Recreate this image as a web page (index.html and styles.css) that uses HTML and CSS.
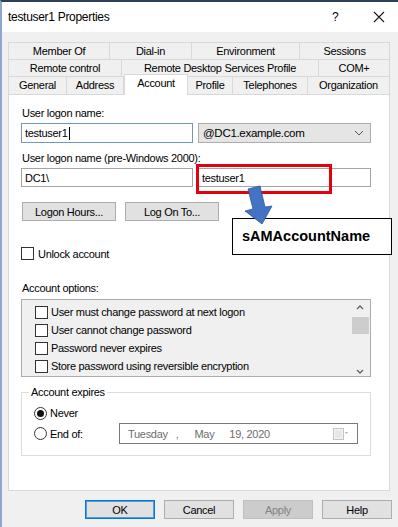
FILE: index.html
```html
<!DOCTYPE html>
<html lang="en">
  <head>
    <meta charset="UTF-8" />
    <meta name="viewport" content="width=device-width, initial-scale=1.0" />
    <title>testuser1 Properties</title>
    <link rel="stylesheet" href="styles.css">
  </head>
  <body>
    <div class="window">
      <div class="titlebar">
        <span class="title">testuser1 Properties</span>
        <span class="title-help">?</span>
        <span class="title-close">
          <svg width="12" height="12" viewBox="0 0 12 12">
            <path d="M1 1 L11 11 M11 1 L1 11" stroke="#1a1a1a" stroke-width="1.1" fill="none" />
          </svg>
        </span>
      </div>

      <div class="dialog">
        <div class="tabs">
          <div class="tab-row row-1">
            <div class="tab first">Member Of</div>
            <div class="tab">Dial-in</div>
            <div class="tab">Environment</div>
            <div class="tab">Sessions</div>
          </div>
          <div class="tab-row row-2">
            <div class="tab first">Remote control</div>
            <div class="tab">Remote Desktop Services Profile</div>
            <div class="tab">COM+</div>
          </div>
          <div class="tab-row row-3">
            <div class="tab first">General</div>
            <div class="tab">Address</div>
            <div class="tab active">Account</div>
            <div class="tab">Profile</div>
            <div class="tab">Telephones</div>
            <div class="tab">Organization</div>
          </div>
        </div>

        <div class="panel">
          <div class="label">User logon name:</div>
          <div class="field-row tall">
            <div class="textbox focused">testuser1<span class="caret"></span></div>
            <div class="combo">
              <span>@DC1.example.com</span>
              <svg width="10" height="6" viewBox="0 0 10 6">
                <path d="M1 1 L5 5 L9 1" stroke="#555" stroke-width="1" fill="none" />
              </svg>
            </div>
          </div>

          <div class="label gap-8">User logon name (pre-Windows 2000):</div>
          <div class="field-row">
            <div class="textbox">DC1\</div>
            <div class="textbox">testuser1</div>
          </div>

          <div class="button-row">
            <div class="btn">Logon Hours...</div>
            <div class="btn">Log On To...</div>
          </div>

          <div class="check-row unlock">
            <span class="checkbox"></span>
            <span>Unlock account</span>
          </div>

          <div class="label gap-20">Account options:</div>
          <div class="listbox">
            <div class="list-items">
              <div class="list-item"><span class="checkbox"></span>User must change password at next logon</div>
              <div class="list-item"><span class="checkbox"></span>User cannot change password</div>
              <div class="list-item"><span class="checkbox"></span>Password never expires</div>
              <div class="list-item"><span class="checkbox"></span>Store password using reversible encryption</div>
            </div>
            <div class="scrollbar">
              <svg class="scroll-arrow" width="16" height="10" viewBox="0 0 16 10">
                <path d="M5 6 L8 3 L11 6" stroke="#606060" stroke-width="1.3" fill="none" />
              </svg>
              <div class="scroll-thumb"></div>
              <div class="scroll-track"></div>
              <svg class="scroll-arrow" width="16" height="10" viewBox="0 0 16 10">
                <path d="M5 4 L8 7 L11 4" stroke="#606060" stroke-width="1.3" fill="none" />
              </svg>
            </div>
          </div>

          <fieldset class="group">
            <legend>Account expires</legend>
            <div class="group-body">
              <div class="radio-row">
                <span class="radio checked"></span>
                <span>Never</span>
              </div>
              <div class="radio-row end-of">
                <span class="radio"></span>
                <span class="end-label">End of:</span>
                <div class="datepicker">
                  <span class="dp-day">Tuesday</span>
                  <span class="dp-comma">,</span>
                  <span class="dp-month">May</span>
                  <span class="dp-date">19, 2020</span>
                  <svg class="dp-icon" width="18" height="12" viewBox="0 0 18 12">
                    <rect x="0.5" y="0.5" width="10" height="11" fill="#f4f4f4" stroke="#c4c4c4" />
                    <path d="M2 3 H9 M2 5 H9 M2 7 H9 M2 9 H9" stroke="#dadada" stroke-width="1" />
                    <path d="M12 4 L15 4 L13.5 6 Z" fill="#b0b0b0" />
                  </svg>
                </div>
              </div>
            </div>
          </fieldset>

          <!-- annotation drawn over the screenshot -->
          <div class="highlight"></div>
          <svg class="pointer" width="36" height="42" viewBox="0 0 36 42">
            <path d="M8 5 L20 2 L25 23 L32 22 L22 40 L5 27 L13 25 Z" fill="#4472c4" stroke="#2f5597" stroke-width="0.8" />
          </svg>
          <div class="callout">sAMAccountName</div>
        </div>

        <div class="dialog-buttons">
          <div class="btn default">OK</div>
          <div class="btn">Cancel</div>
          <div class="btn disabled">Apply</div>
          <div class="btn">Help</div>
        </div>
      </div>
    </div>
  </body>
</html>
```

FILE: styles.css
```css
* {
  margin: 0;
  padding: 0;
  box-sizing: border-box;
}

body {
  width: 398px;
  height: 527px;
  overflow: hidden;
  font-family: "Liberation Sans", Arial, sans-serif;
  font-size: 11px;
  letter-spacing: -0.3px;
  color: #000;
  background: #f0f0f0;
}

.window {
  height: 527px;
  display: flex;
  flex-direction: column;
  border-top: 2px solid #2e4057;
  border-left: 2px solid #8ca6cc;
}

.titlebar {
  height: 30px;
  background: #fff;
  display: flex;
  align-items: center;
  padding-left: 6px;
}

.title {
  font-size: 12px;
  flex: 1;
}

.title-help {
  font-size: 12px;
  width: 16px;
  margin-right: 25px;
}

.title-close {
  display: flex;
  width: 12px;
  margin-right: 13px;
}

.dialog {
  flex: 1;
  padding: 10px 6px 0 6px;
}

/* tabs */
.tab-row {
  display: grid;
  height: 17px;
}

.row-1 {
  grid-template-columns: 102px 82px 108px 90px;
}

.row-2 {
  grid-template-columns: 114px 197px 71px;
}

.row-3 {
  grid-template-columns: 59px 57px 64px 45px 75px 82px;
  height: 18px;
}

.tab {
  border-top: 1px solid #d9d9d9;
  border-right: 1px solid #d9d9d9;
  background: #f0f0f0;
  text-align: center;
  line-height: 16px;
  white-space: nowrap;
}

.tab.first {
  border-left: 1px solid #d9d9d9;
}

.tab.active {
  position: relative;
  z-index: 1;
  background: #fff;
  border-left: 1px solid #d9d9d9;
  margin-top: -2px;
  margin-bottom: -1px;
  line-height: 16px;
}

/* page */
.panel {
  position: relative;
  height: 397px;
  width: 382px;
  background: #fff;
  border: 1px solid #d9d9d9;
  padding: 11px 18px 0 12px;
}

.label {
  line-height: 14px;
  margin-bottom: 3px;
  margin-left: 1px;
}

.gap-8 {
  margin-top: 8px;
}

.gap-20 {
  margin-top: 20px;
}

.field-row {
  display: grid;
  grid-template-columns: 172px 173px;
  gap: 5px;
  height: 19px;
}

.field-row.tall {
  height: 20px;
}

.textbox {
  border: 1px solid #a3a3a3;
  background: #fff;
  padding-left: 3px;
  display: flex;
  align-items: center;
}

.textbox.focused {
  border-color: #7596bb;
}

.caret {
  width: 1px;
  height: 13px;
  background: #000;
  margin-left: 1px;
}

.combo {
  border: 1px solid #adadad;
  background: #e5e5e5;
  display: flex;
  align-items: center;
  justify-content: space-between;
  padding: 0 6px 0 4px;
  font-size: 11.5px;
}

.button-row {
  display: flex;
  gap: 9px;
  margin-top: 15px;
  margin-left: 1px;
}

.btn {
  height: 19px;
  background: #e1e1e1;
  border: 1px solid #adadad;
  display: flex;
  align-items: center;
  justify-content: center;
}

.button-row .btn {
  width: 94px;
}

.checkbox {
  display: inline-block;
  width: 13px;
  height: 13px;
  border: 1px solid #333;
  background: #fff;
  flex-shrink: 0;
}

.check-row {
  display: flex;
  align-items: center;
  gap: 4px;
  height: 15px;
}

.check-row.unlock {
  margin-top: 25px;
}

/* account options list */
.listbox {
  display: flex;
  width: 350px;
  height: 78px;
  margin-top: 4px;
  border: 1px solid #acacac;
  background: #f0f0f0;
}

.list-items {
  flex: 1;
  padding: 3px 0 0 13px;
}

.list-item {
  display: flex;
  align-items: center;
  gap: 3px;
  height: 18px;
}

.scrollbar {
  width: 17px;
  display: flex;
  flex-direction: column;
  padding-top: 3px;
  margin-right: 1px;
}

.scroll-arrow {
  display: block;
  flex-shrink: 0;
}

.scroll-thumb {
  height: 17px;
  margin: 4px 0 0 0;
  background: #cdcdcd;
}

.scroll-track {
  flex: 1;
}

/* account expires group */
.group {
  width: 350px;
  margin-top: 8px;
  border: 1px solid #dcdcdc;
  padding: 7px 0 11px 0;
}

.group legend {
  margin-left: 7px;
  padding: 0 2px;
  line-height: 14px;
}

.group-body {
  padding-left: 12px;
}

.radio-row {
  display: flex;
  align-items: center;
  gap: 3px;
  height: 14px;
}

.radio {
  width: 13px;
  height: 13px;
  border: 1px solid #333;
  border-radius: 50%;
  background: #fff;
  display: flex;
  align-items: center;
  justify-content: center;
}

.radio.checked::after {
  content: "";
  width: 7px;
  height: 7px;
  border-radius: 50%;
  background: #111;
}

.radio-row.end-of {
  height: 21px;
  margin-top: 3px;
}

.end-label {
  width: 66px;
}

.datepicker {
  width: 239px;
  height: 21px;
  border: 1px solid #7a7a7a;
  display: flex;
  align-items: center;
  color: #6d6d6d;
  padding-left: 8px;
}

.dp-comma {
  margin-left: 8px;
}

.dp-month {
  margin-left: 16px;
}

.dp-date {
  margin-left: 15px;
}

.dp-icon {
  margin-left: auto;
  margin-right: 6px;
}

/* annotation overlay */
.highlight {
  position: absolute;
  left: 187px;
  top: 69px;
  width: 136px;
  height: 30px;
  border: 3px solid #e3000f;
}

.pointer {
  position: absolute;
  z-index: 2;
  left: 231px;
  top: 89px;
}

.callout {
  position: absolute;
  left: 223px;
  top: 123px;
  width: 160px;
  height: 37px;
  background: #fff;
  border: 1px solid #000;
  font-size: 14.5px;
  font-weight: bold;
  letter-spacing: 0;
  padding-left: 9px;
  line-height: 35px;
}

/* bottom buttons */
.dialog-buttons {
  display: flex;
  justify-content: flex-end;
  gap: 9px;
  margin-top: 9px;
}

.dialog-buttons .btn {
  width: 70px;
}

.btn.default {
  border-color: #0078d7;
  box-shadow: inset 0 0 0 1px #5a9ad8;
}

.btn.disabled {
  background: #cccccc;
  border-color: #bfbfbf;
  color: #838383;
}
```
